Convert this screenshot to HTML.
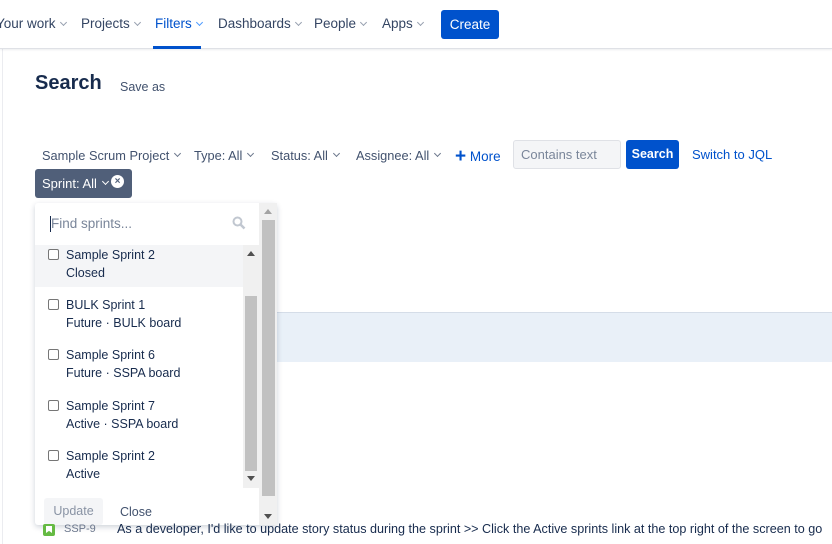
<!DOCTYPE html>
<html><head><meta charset="utf-8"><style>
*{box-sizing:border-box;margin:0;padding:0}
body{width:832px;height:544px;overflow:hidden;background:#fff;font-family:"Liberation Sans",sans-serif;color:#172b4d;position:relative;font-size:13px}
.abs{position:absolute;white-space:nowrap}
.nav{position:absolute;left:0;top:0;width:832px;height:49px;border-bottom:1px solid #dfe1e6;box-shadow:0 1px 2px rgba(9,30,66,.08)}
.ni{position:absolute;top:16px;font-size:13.5px;color:#344563}
.chev{display:inline-block;width:5px;height:5px;border-right:1.3px solid #97a0af;border-bottom:1.3px solid #97a0af;transform:rotate(45deg);margin-left:5px;position:relative;top:-3px}
.cs{display:inline-block;width:5px;height:5px;border-right:1.2px solid #6b778c;border-bottom:1.2px solid #6b778c;transform:rotate(45deg);margin-left:6px;position:relative;top:-4px}
.f{position:absolute;top:148px;font-size:12.8px;color:#42526e}
.it{position:absolute;left:35px;width:208px;height:50px;font-size:12.5px;color:#172b4d}
.it .cb{position:absolute;left:13px;top:4px;width:11px;height:11px;border:1px solid #767676;border-radius:2px;background:#fff}
.it .t1{position:absolute;left:31px;top:3px}
.it .t2{position:absolute;left:31px;top:21px}
</style></head><body>
<div style="position:absolute;left:2px;top:49px;width:1px;height:495px;background:#ebecf0"></div>
<div class="nav">
<div class="ni" style="left:-4px;color:#344563">Your work<span class="chev"></span></div>
<div class="ni" style="left:81px">Projects<span class="chev"></span></div>
<div class="ni" style="left:155px;color:#0052cc">Filters<span class="chev" style="border-color:#4c9aff"></span></div>
<div style="position:absolute;left:153px;top:46px;width:48px;height:3px;background:#0052cc"></div>
<div class="ni" style="left:218px">Dashboards<span class="chev"></span></div>
<div class="ni" style="left:314px">People<span class="chev"></span></div>
<div class="ni" style="left:382px">Apps<span class="chev"></span></div>
<div class="abs" style="left:441px;top:10px;width:58px;height:29px;background:#0052cc;border-radius:3px;color:#fff;font-size:13.5px;text-align:center;line-height:29px;font-weight:500">Create</div>
</div>
<div class="abs" style="left:35px;top:72px;font-size:20px;font-weight:bold;color:#172b4d">Search</div>
<div class="abs" style="left:120px;top:80px;font-size:12.5px;color:#42526e">Save as</div>

<div class="f" style="left:42px">Sample Scrum Project<span class="cs"></span></div>
<div class="f" style="left:194px">Type: All<span class="cs"></span></div>
<div class="f" style="left:271px">Status: All<span class="cs"></span></div>
<div class="f" style="left:356px">Assignee: All<span class="cs"></span></div>
<div class="abs" style="left:455px;top:145px;font-size:13.5px;color:#0052cc"><span style="font-size:19px;font-weight:bold;position:relative;top:1px">+</span> More</div>
<div class="abs" style="left:513px;top:140px;width:108px;height:29px;background:#f4f5f7;border:1px solid #dfe1e6;border-radius:3px;color:#7a869a;font-size:13px;line-height:27px;padding-left:7px">Contains text</div>
<div class="abs" style="left:626px;top:140px;width:53px;height:29px;background:#0052cc;border-radius:3px;color:#fff;font-weight:bold;font-size:12.5px;text-align:center;line-height:29px">Search</div>
<div class="abs" style="left:692px;top:147px;font-size:13px;color:#0052cc">Switch to JQL</div>

<div class="abs" style="left:35px;top:169px;width:97px;height:29px;background:#505f79;border-radius:3px;color:#fff;font-size:13px;line-height:29px;padding-left:7px">Sprint: All<span class="cs" style="border-color:#fff"></span><span style="position:absolute;left:76px;top:6px;width:13px;height:13px;border-radius:50%;background:#fff;color:#505f79;font-size:10px;line-height:13px;text-align:center;font-weight:bold">×</span></div>

<div class="abs" style="left:277px;top:312px;width:555px;height:50px;background:#e9f0f8;border-top:1px solid #d5dde8"></div>

<div class="abs" style="left:35px;top:203px;width:242px;height:322px;background:#fff;box-shadow:0 2px 6px rgba(9,30,66,.2);border-radius:3px"></div>
<div class="abs" style="left:50px;top:216px;width:1px;height:16px;background:#172b4d"></div>
<div class="abs" style="left:51px;top:216px;font-size:13.5px;color:#7a869a">Find sprints...</div>
<svg class="abs" style="left:232px;top:216px" width="14" height="14" viewBox="0 0 14 14"><circle cx="5.5" cy="5.5" r="4" fill="none" stroke="#c1c7d0" stroke-width="2"/><path d="M8.5 8.5L12.5 12.5" stroke="#c1c7d0" stroke-width="2.5"/></svg>
<div class="it" style="top:245px;height:42px;background:#f4f5f7"><div class="cb"></div><div class="t1">Sample Sprint 2</div><div class="t2">Closed</div></div>
<div class="it" style="top:295px"><div class="cb"></div><div class="t1">BULK Sprint 1</div><div class="t2">Future · BULK board</div></div>
<div class="it" style="top:345px"><div class="cb"></div><div class="t1">Sample Sprint 6</div><div class="t2">Future · SSPA board</div></div>
<div class="it" style="top:396px"><div class="cb"></div><div class="t1">Sample Sprint 7</div><div class="t2">Active · SSPA board</div></div>
<div class="it" style="top:446px"><div class="cb"></div><div class="t1">Sample Sprint 2</div><div class="t2">Active</div></div>
<div class="abs" style="left:243px;top:245px;width:16px;height:243px;background:#f0f0f0"></div>
<div class="abs" style="left:245px;top:296px;width:12px;height:175px;background:#c1c1c1"></div>
<div class="abs" style="left:247px;top:251px;border:4px solid transparent;border-bottom:5px solid #505050;border-top:0"></div>
<div class="abs" style="left:247px;top:476px;border:4px solid transparent;border-top:5px solid #505050;border-bottom:0"></div>
<div class="abs" style="left:259px;top:203px;width:18px;height:322px;background:#f0f0f0"></div>
<div class="abs" style="left:262px;top:220px;width:13px;height:276px;background:#c1c1c1"></div>
<div class="abs" style="left:264px;top:209px;border:4px solid transparent;border-bottom:5px solid #a3a3a3;border-top:0"></div>
<div class="abs" style="left:264px;top:514px;border:4px solid transparent;border-top:5px solid #505050;border-bottom:0"></div>
<div class="abs" style="left:44px;top:498px;width:59px;height:27px;background:#f4f5f7;border-radius:3px;color:#8993a4;font-size:12.5px;text-align:center;line-height:27px">Update</div>
<div class="abs" style="left:120px;top:505px;font-size:12.5px;color:#42526e">Close</div>

<div class="abs" style="left:43px;top:524px;width:12px;height:12px;background:#65ba43;border-radius:2px"></div>
<div class="abs" style="left:46px;top:526px;width:6px;height:7px;background:#fff;clip-path:polygon(0 0,100% 0,100% 100%,50% 70%,0 100%)"></div>
<div class="abs" style="left:64px;top:523px;font-size:11px;color:#6b778c">SSP-9</div>
<div class="abs" style="left:117px;top:522px;font-size:12.6px;color:#172b4d">As a developer, I'd like to update story status during the sprint &gt;&gt; Click the Active sprints link at the top right of the screen to go</div>
</body></html>
